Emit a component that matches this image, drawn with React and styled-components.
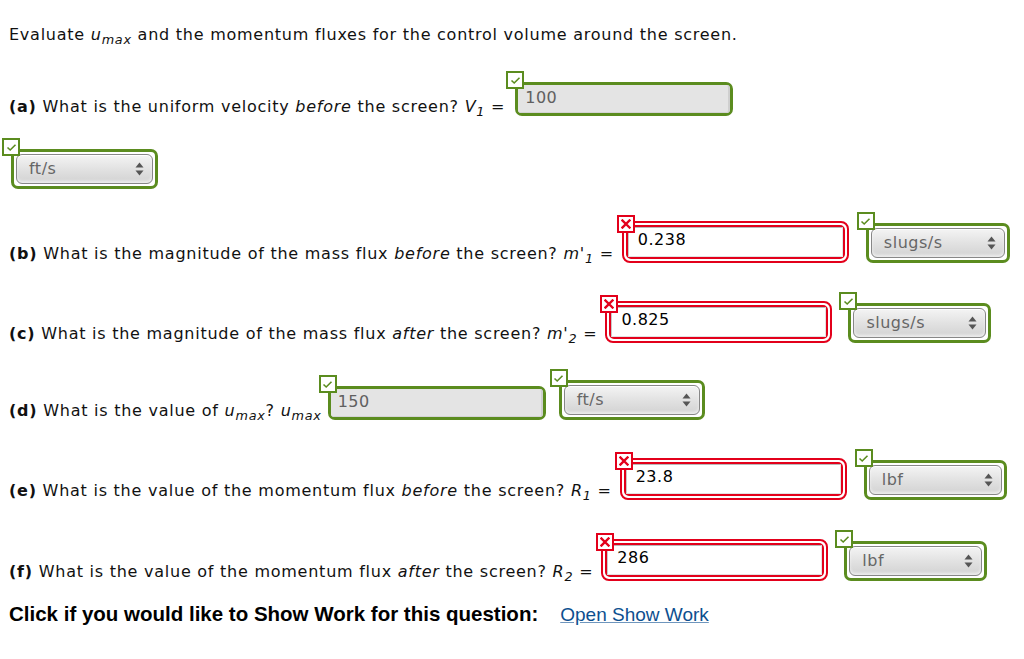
import styled, { createGlobalStyle } from "styled-components";

const GREEN = "#5b8c1f";
const RED = "#e3001b";

const GlobalStyle = createGlobalStyle`
  body {
    margin: 0;
    background: #ffffff;
    font-family: "DejaVu Sans", Verdana, sans-serif;
    color: #111111;
  }
`;

const Page = styled.div`
  padding: 25px 8px 20px 9px;
  display: flex;
  flex-direction: column;
`;

const Heading = styled.div`
  font-size: 16px;
  line-height: 20px;
`;

const Row = styled.div`
  display: flex;
  align-items: flex-end;
  margin-top: ${(p) => p.$top ?? 38}px;
  margin-left: ${(p) => p.$left ?? 0}px;
`;

const Label = styled.span`
  font-size: 16px;
  line-height: 18px;
  letter-spacing: 0.75px;
  white-space: nowrap;

  b {
    font-weight: bold;
  }

  sub {
    font-size: 0.8em;
    line-height: 0;
    vertical-align: -0.3em;
  }
`;

const Wrap = styled.div`
  position: relative;
  flex: none;
  margin-left: ${(p) => p.$gap ?? 0}px;
`;

const Badge = styled.div`
  position: absolute;
  left: ${(p) => (p.$bad ? -5 : -9)}px;
  top: ${(p) => (p.$bad ? -6 : -11)}px;
  width: 18px;
  height: 18px;
  box-sizing: border-box;
  background: #ffffff;
  border: 2px solid ${(p) => (p.$bad ? RED : GREEN)};
  display: flex;
  align-items: center;
  justify-content: center;
  z-index: 2;
`;

const GreenFrame = styled.div`
  box-sizing: border-box;
  width: ${(p) => p.$w}px;
  height: ${(p) => p.$h}px;
  border: 3px solid ${GREEN};
  border-radius: 7px;
  padding: ${(p) => p.$pad ?? 0}px;
  background: #ffffff;
  display: flex;
`;

const RedFrame = styled.div`
  box-sizing: border-box;
  width: 227px;
  height: 42px;
  border: 2px solid ${RED};
  border-radius: 8px;
  padding: 2px;
  background: #ffffff;
  display: flex;
`;

const RedInner = styled.div`
  flex: 1;
  border: 2px solid ${RED};
  border-radius: 5px;
  display: flex;
`;

const TextInput = styled.input`
  flex: 1;
  min-width: 0;
  box-sizing: border-box;
  margin: 0;
  outline: none;
  font-family: "DejaVu Sans", Verdana, sans-serif;
  font-size: 16px;
  letter-spacing: 0.5px;
  padding: 0 0 5px 9px;
  border: none;
  border-top: 1px solid #b9b9b9;
  border-left: 1px solid #c9c9c9;
  border-right: 1px solid #e2e2e2;
  border-bottom: 1px solid #e2e2e2;
  color: ${(p) => (p.$locked ? "#606060" : "#000000")};
  background: ${(p) => (p.$locked ? "#e4e4e4" : "#ffffff")};
  border-radius: ${(p) => (p.$locked ? "3px" : "0")};
  ${(p) =>
    p.$locked &&
    `
    border: none;
    border-right: 2px solid #cfcfcf;
    border-bottom: 1px solid #d4d4d4;
    padding: 0 0 2px 7px;
  `}
`;

const Select = styled.div`
  flex: 1;
  box-sizing: border-box;
  border: 1px solid #878787;
  border-radius: 6px;
  background: linear-gradient(#f4f4f4 0%, #e2e2e2 50%, #d2d2d2 100%);
  box-shadow: inset 0 1px 0 #ffffff, inset 0 -2px 3px rgba(255, 255, 255, 0.6);
  display: flex;
  align-items: center;
  justify-content: space-between;
  padding: 0 8px 1px 12px;
  color: #666666;
  font-size: 16px;
  letter-spacing: 0.5px;
`;

const Check = () => (
  <svg width="11" height="9" viewBox="0 0 11 9">
    <polyline points="1.5,4.5 4.2,7 9.5,1.8" fill="none" stroke={GREEN} strokeWidth="1.6" />
  </svg>
);

const Cross = () => (
  <svg width="10" height="10" viewBox="0 0 10 10">
    <path d="M1.5 1.5 L8.5 8.5 M8.5 1.5 L1.5 8.5" stroke={RED} strokeWidth="2.4" strokeLinecap="square" />
  </svg>
);

const Arrows = () => (
  <svg width="9" height="14" viewBox="0 0 9 14">
    <path d="M4.5 0.5 L8.5 5.5 L0.5 5.5 Z" fill="#555555" />
    <path d="M4.5 13.5 L8.5 8.5 L0.5 8.5 Z" fill="#555555" />
  </svg>
);

const LockedAnswer = ({ value, gap }) => (
  <Wrap $gap={gap}>
    <Badge><Check /></Badge>
    <GreenFrame $w={218} $h={34}>
      <TextInput $locked readOnly value={value} />
    </GreenFrame>
  </Wrap>
);

const WrongAnswer = ({ value, gap }) => (
  <Wrap $gap={gap}>
    <Badge $bad><Cross /></Badge>
    <RedFrame>
      <RedInner>
        <TextInput readOnly value={value} />
      </RedInner>
    </RedFrame>
  </Wrap>
);

const UnitAnswer = ({ unit, gap, width = 144 }) => (
  <Wrap $gap={gap}>
    <Badge><Check /></Badge>
    <GreenFrame $w={width} $h={40} $pad={2}>
      <Select>
        <span>{unit}</span>
        <Arrows />
      </Select>
    </GreenFrame>
  </Wrap>
);

const Footer = styled.div`
  margin-top: 22px;
  display: flex;
  align-items: baseline;
  font-family: "Liberation Sans", Arial, sans-serif;
  line-height: 22px;
`;

const FooterLabel = styled.span`
  font-weight: bold;
  font-size: 20.5px;
  color: #000000;
`;

const ShowWork = styled.a`
  margin-left: 22px;
  font-size: 19px;
  color: #0d4f8f;
  text-decoration: underline;
  text-decoration-color: #6f96bd;
  cursor: pointer;
`;

const Umax = () => (
  <i>
    u<sub>max</sub>
  </i>
);

export default function App() {
  return (
    <>
      <GlobalStyle />
      <Page>
        <Heading>
          <Label>
            Evaluate <Umax /> and the momentum fluxes for the control volume around the screen.
          </Label>
        </Heading>

        <Row $top={37}>
          <Label>
            <b>(a)</b> What is the uniform velocity <i>before</i> the screen? <i>V<sub>1</sub></i> =
          </Label>
          <LockedAnswer value="100" gap={10} />
        </Row>
        <Row $top={33} $left={2}>
          <UnitAnswer unit="ft/s" width={147} />
        </Row>

        <Row $top={32}>
          <Label>
            <b>(b)</b> What is the magnitude of the mass flux <i>before</i> the screen? <i>m'<sub>1</sub></i> =
          </Label>
          <WrongAnswer value="0.238" gap={8} />
          <UnitAnswer unit="slugs/s" gap={17} />
        </Row>

        <Row>
          <Label>
            <b>(c)</b> What is the magnitude of the mass flux <i>after</i> the screen? <i>m'<sub>2</sub></i> =
          </Label>
          <WrongAnswer value="0.825" gap={8} />
          <UnitAnswer unit="slugs/s" gap={16} width={143} />
        </Row>

        <Row $top={37}>
          <Label>
            <b>(d)</b> What is the value of <Umax />? <Umax />
          </Label>
          <LockedAnswer value="150" gap={6} />
          <UnitAnswer unit="ft/s" gap={13} width={146} />
        </Row>

        <Row>
          <Label>
            <b>(e)</b> What is the value of the momentum flux <i>before</i> the screen? <i>R<sub>1</sub></i> =
          </Label>
          <WrongAnswer value="23.8" gap={8} />
          <UnitAnswer unit="lbf" gap={17} width={143} />
        </Row>

        <Row $top={39}>
          <Label>
            <b>(f)</b> What is the value of the momentum flux <i>after</i> the screen? <i>R<sub>2</sub></i> =
          </Label>
          <WrongAnswer value="286" gap={8} />
          <UnitAnswer unit="lbf" gap={16} width={143} />
        </Row>

        <Footer>
          <FooterLabel>Click if you would like to Show Work for this question:</FooterLabel>
          <ShowWork>Open Show Work</ShowWork>
        </Footer>
      </Page>
    </>
  );
}
